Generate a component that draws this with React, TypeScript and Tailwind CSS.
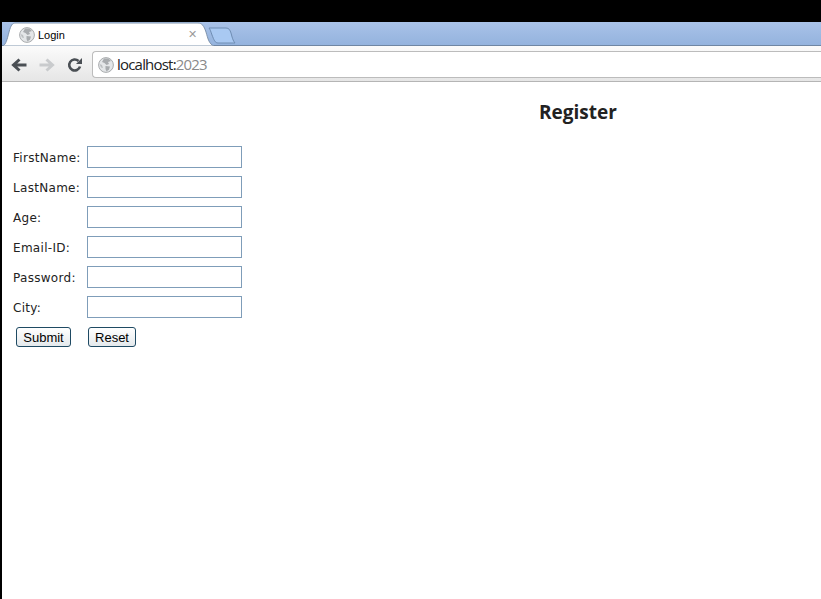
import React from 'react'

const fields = ['FirstName:', 'LastName:', 'Age:', 'Email-ID:', 'Password:', 'City:']

const Globe = ({ size = 16 }: { size?: number }) => (
  <svg width={size} height={size} viewBox="0 0 16 16" className="shrink-0">
    <circle cx="8" cy="8" r="7.4" fill="#e4e6e8" stroke="#a9acae" strokeWidth="1" />
    <path d="M6 1.5 L10.5 1.5 L13 4 L10 5 L11 7 L8.5 8 L6.5 6 L4 5 Z" fill="#a8abae" />
    <path d="M7.5 9 L12 9.5 L11 12.5 L8.5 14.5 L7.5 12 Z" fill="#a8abae" />
    <path d="M1.5 7 L4 8 L5 11 L3 10.5 Z" fill="#bcbfc1" />
  </svg>
)

const App = () => {
  return (
    <div className="h-[599px] w-[821px] overflow-hidden bg-black pt-[22px] pl-[2px] font-['DejaVu_Sans',sans-serif]">
      {/* tab strip */}
      <div className="relative h-[24px] border-b border-[#6f86a3] bg-gradient-to-b from-[#a9c2e8] to-[#94b3de]">
        <svg width="240" height="24" viewBox="0 0 240 24" className="absolute top-0 left-[-2px]">
          <path d="M3 24 C6 22 7 18 9 10 C11 3 12 1 16 1 L198 1 C202 1 204 4 206 10 C208 17 209 22 214 24 Z" fill="#ffffff" stroke="#7f94ad" strokeWidth="1" />
          <path d="M212 6 L226 6 C229 6 230 8 231 11 C232 15 233 19 235 21 L218 21 C215 21 214 18 212 13 C211 10 210 7 209 6 Z" fill="#a9c9f2" stroke="#6f8db3" strokeWidth="1" />
        </svg>
        <div className="absolute top-[5px] left-[17px] flex items-center gap-[3px]">
          <Globe />
          <span className="font-['Liberation_Sans',sans-serif] text-[11px] text-black">Login</span>
        </div>
        <span className="absolute top-[7px] left-[186px] text-[11px] leading-3 text-[#9a9a9a]">✕</span>
      </div>

      {/* toolbar */}
      <div className="flex h-[36px] items-center border-b border-[#b5b5b5] bg-gradient-to-b from-[#fbfbfb] to-[#e6e6e6] pt-[2px] pl-[9px]">
        <svg width="16" height="16" viewBox="0 0 16 16" className="mr-[12px]">
          <path d="M15.5 8 H4 M8.5 2.5 L2.5 8 L8.5 13.5" fill="none" stroke="#4a4f54" strokeWidth="3" />
        </svg>
        <svg width="16" height="16" viewBox="0 0 16 16" className="mr-[12px]">
          <path d="M0.5 8 H12 M7.5 2.5 L13.5 8 L7.5 13.5" fill="none" stroke="#c9cbcd" strokeWidth="3" />
        </svg>
        <svg width="16" height="16" viewBox="0 0 16 16" className="mr-[9px]">
          <path d="M13 9.5 A5.5 5.5 0 1 1 11.5 4" fill="none" stroke="#4a4f54" strokeWidth="2.6" />
          <path d="M9 7 L15 7 L15 1 Z" fill="#4a4f54" />
        </svg>
        <div className="flex h-[27px] flex-1 items-center gap-[3px] rounded-l-[4px] border border-r-0 border-[#bcbcbc] bg-white pl-[5px] font-['Open_Sans',sans-serif] text-[15px] tracking-[-0.8px]">
          <Globe />
          <span className="text-[#222]">
            localhost:<span className="text-[#8a8a8a]">2023</span>
          </span>
        </div>
      </div>

      {/* page */}
      <div className="h-[517px] bg-white pl-[11px] text-[12px] text-[#222]">
        <h1 className="h-[64px] pt-[17px] pl-[526px] font-['Open_Sans',sans-serif] text-[19px] leading-[26px] font-bold text-[#222]">
          Register
        </h1>
        <form className="flex flex-col gap-[8px]">
          {fields.map((f) => (
            <div key={f} className="flex h-[22px] items-center">
              <label className="w-[74px] pt-[2px] tracking-[0.3px]">{f}</label>
              <input className="h-[22px] w-[155px] border border-[#7f9db9] bg-white" />
            </div>
          ))}
          <div className="flex pt-[1px] pl-[3px] font-['Liberation_Sans',sans-serif] text-[13px] text-black">
            <button type="button" className="h-[20px] w-[55px] rounded-[3px] border border-[#1f4a63] bg-gradient-to-b from-white to-[#e4e9ec]">
              Submit
            </button>
            <button type="button" className="ml-[17px] h-[20px] w-[48px] rounded-[3px] border border-[#1f4a63] bg-gradient-to-b from-white to-[#e4e9ec]">
              Reset
            </button>
          </div>
        </form>
      </div>
    </div>
  )
}

export default App
